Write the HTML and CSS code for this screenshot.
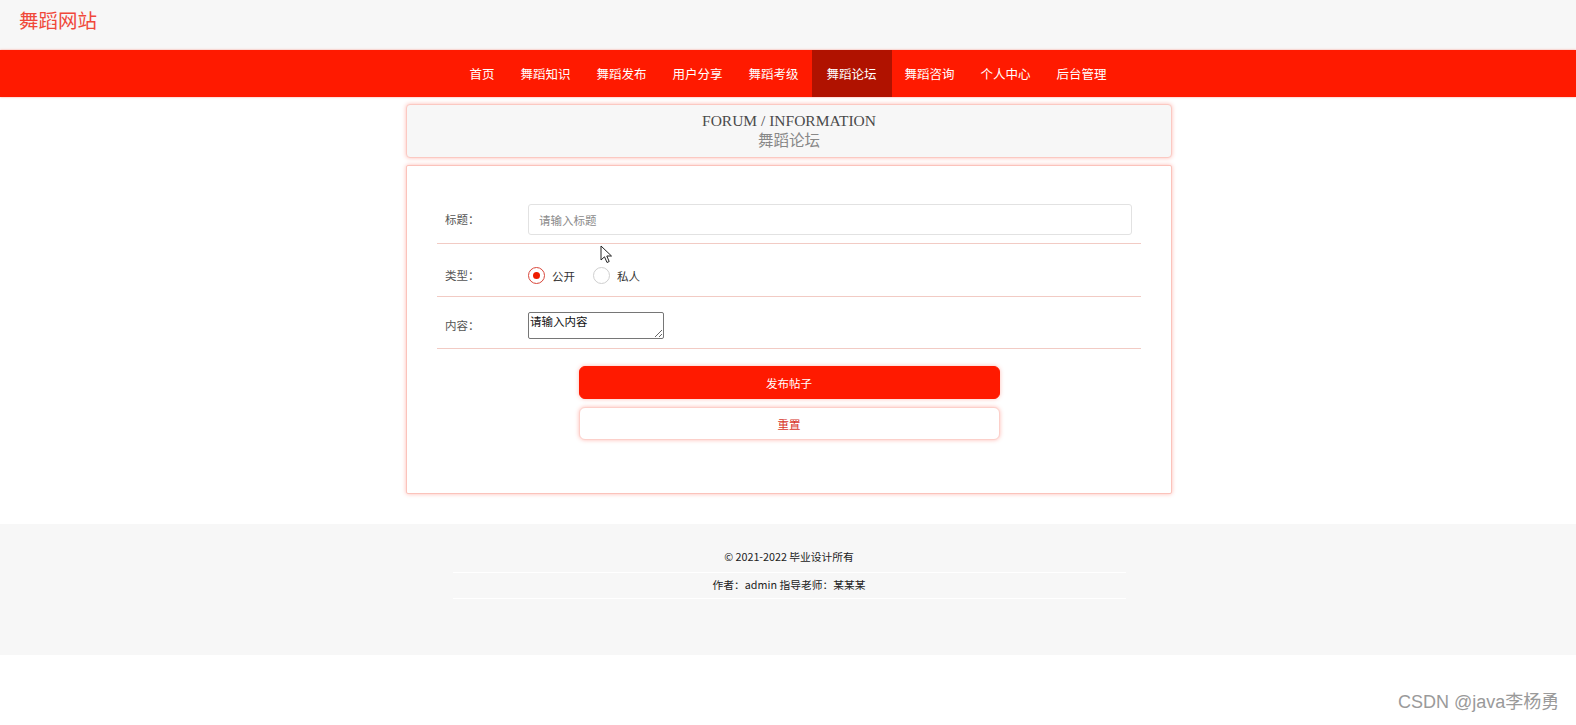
FILE: index.html
```html
<!DOCTYPE html>
<html lang="zh-CN">
<head>
<meta charset="utf-8">
<title>舞蹈论坛</title>
<link rel="stylesheet" href="styles.css">
</head>
<body>
<header class="topbar">
  <div class="site-title">舞蹈网站</div>
</header>
<nav class="nav">
  <ul class="nav-list">
    <li class="nav-item">首页</li>
    <li class="nav-item">舞蹈知识</li>
    <li class="nav-item">舞蹈发布</li>
    <li class="nav-item">用户分享</li>
    <li class="nav-item">舞蹈考级</li>
    <li class="nav-item active">舞蹈论坛</li>
    <li class="nav-item">舞蹈咨询</li>
    <li class="nav-item">个人中心</li>
    <li class="nav-item">后台管理</li>
  </ul>
</nav>
<main class="main">
  <div class="title-box">
    <div class="title-en">FORUM / INFORMATION</div>
    <div class="title-cn">舞蹈论坛</div>
  </div>
  <div class="card">
    <form class="form">
      <div class="row row-title">
        <label class="label">标题：</label>
        <input class="text-input" type="text" placeholder="请输入标题">
      </div>
      <div class="row row-type">
        <label class="label">类型：</label>
        <div class="radios">
          <span class="radio checked"></span><span class="radio-text">公开</span>
          <span class="radio"></span><span class="radio-text">私人</span>
        </div>
      </div>
      <div class="row row-content">
        <label class="label">内容：</label>
        <textarea class="textarea">请输入内容</textarea>
      </div>
      <div class="buttons">
        <button type="button" class="btn btn-primary">发布帖子</button>
        <button type="button" class="btn btn-reset">重置</button>
      </div>
    </form>
  </div>
</main>
<footer class="footer">
  <p class="foot-line">© 2021-2022 毕业设计所有</p>
  <p class="foot-line second">作者：admin 指导老师：某某某</p>
</footer>
<svg class="cursor" width="14" height="20" viewBox="0 0 14 20"><path d="M1 1 L1 15 L4.5 11.8 L7 17.5 L9.2 16.5 L6.8 11 L11.5 11 Z" fill="#fff" stroke="#222" stroke-width="1" stroke-linejoin="round"/></svg>
<div class="watermark">CSDN @java李杨勇</div>
</body>
</html>
```
FILE: styles.css
```css
* { box-sizing: border-box; }
html, body { margin: 0; padding: 0; }
body {
  font-family: "Liberation Sans", "Noto Sans CJK SC", sans-serif;
  background: #fff;
  color: #333;
  position: relative;
  min-height: 725px;
}
.topbar {
  height: 50px;
  background: #f7f7f7;
  padding-left: 19px;
  display: flex;
  align-items: center;
}
.site-title {
  font-family: "Noto Sans CJK SC", sans-serif;
  font-size: 19.5px;
  line-height: 24px;
  color: #f0483a;
  margin-top: -11px;
}
.nav {
  height: 47px;
  background: #ff1a00;
  box-shadow: 0 0 2px rgba(255, 90, 70, 0.6);
}
.nav-list {
  list-style: none;
  margin: 0;
  padding: 0;
  display: flex;
  justify-content: center;
  height: 100%;
}
.nav-item {
  font-family: "Noto Sans CJK SC", sans-serif;
  font-size: 12.5px;
  color: #fff;
  line-height: 47px;
  padding: 0 13px;
}
.nav-item.active {
  background: #b01200;
  padding: 0 15px;
}
.main {
  width: 766px;
  margin: 0 auto;
  padding: 7px 0 0;
  position: relative;
  left: 1px;
}
.title-box {
  height: 54px;
  background: #f7f7f7;
  border: 1px solid #fbc9c2;
  border-radius: 4px;
  box-shadow: 0 0 4px rgba(255, 60, 40, 0.35);
  text-align: center;
  padding-top: 6px;
}
.title-en {
  font-family: "Liberation Serif", serif;
  font-size: 15.5px;
  line-height: 19px;
  color: #4a4a4a;
}
.title-cn {
  font-family: "Noto Sans CJK SC", serif;
  font-size: 15.5px;
  line-height: 19px;
  color: #888;
}
.card {
  margin-top: 7px;
  background: #fff;
  border: 1px solid #fbc3bb;
  border-radius: 2px;
  box-shadow: 0 0 4px rgba(255, 60, 40, 0.35);
  padding: 30px 30px 53px;
}
.row {
  display: flex;
  align-items: center;
  border-bottom: 1px solid #f2cbc4;
}
.row-title { padding: 8px 0 8px; }
.row-type { padding: 16px 0 5px; }
.row-content { padding: 13px 0 7px; }
.label {
  width: 91px;
  padding-left: 8px;
  font-family: "Noto Sans CJK SC", sans-serif;
  font-size: 11.5px;
  color: #555;
  line-height: 31px;
}
.text-input {
  width: 604px;
  height: 31px;
  border: 1px solid #e2e2e2;
  border-radius: 3px;
  padding: 0 10px;
  font-family: "Noto Sans CJK SC", sans-serif;
  font-size: 11.5px;
  color: #333;
  outline: none;
}
.text-input::placeholder { color: #8a8a8a; }
.radios {
  display: flex;
  align-items: center;
  height: 31px;
}
.radio {
  width: 17px;
  height: 17px;
  border: 1px solid #cfcfcf;
  border-radius: 50%;
  display: flex;
  align-items: center;
  justify-content: center;
}
.radio.checked { border-color: #d9463a; }
.radio.checked::after {
  content: "";
  width: 7px;
  height: 7px;
  border-radius: 50%;
  background: #ee1d00;
}
.radio-text {
  font-family: "Noto Sans CJK SC", sans-serif;
  font-size: 11.5px;
  color: #333;
  margin: 0 18px 0 7px;
}
.textarea {
  width: 136px;
  height: 27px;
  border: 1px solid #767676;
  border-radius: 2px;
  padding: 1px 1px;
  margin: 2px 0;
  font-family: "Noto Sans CJK SC", sans-serif;
  font-size: 11.5px;
  line-height: 14px;
  color: #111;
  resize: both;
}
.buttons {
  display: flex;
  flex-direction: column;
  align-items: center;
  gap: 8px;
  padding-top: 17px;
}
.btn {
  width: 421px;
  height: 33px;
  border-radius: 6px;
  font-family: "Noto Sans CJK SC", sans-serif;
  font-size: 11.5px;
  cursor: pointer;
  box-shadow: 0 0 4px rgba(255, 60, 40, 0.35);
}
.btn-primary {
  background: #ff1a00;
  border: 1px solid #ff1a00;
  color: #fff;
}
.btn-reset {
  background: #fff;
  border: 1px solid #fcd0ca;
  color: #d8362a;
}
.footer {
  margin-top: 30px;
  height: 131px;
  background: #f7f7f7;
  padding-top: 24px;
  display: flex;
  flex-direction: column;
  align-items: center;
}
.foot-line {
  width: 673px;
  margin: 0;
  text-align: center;
  font-family: "Noto Sans CJK SC", sans-serif;
  font-size: 10.75px;
  color: #222;
  line-height: 16px;
  padding: 1px 0 7px;
  border-bottom: 1px solid #fff;
  position: relative;
  left: 1px;
}
.foot-line.second {
  padding: 4px 0 5px;
}
.cursor {
  position: absolute;
  left: 600px;
  top: 245px;
}
.watermark {
  position: absolute;
  left: 1398px;
  top: 691px;
  font-family: "Liberation Sans", "Noto Sans CJK SC", sans-serif;
  font-size: 18px;
  line-height: 22px;
  color: #9a9a9a;
  text-shadow: 0 0 1px #fff;
}
```
